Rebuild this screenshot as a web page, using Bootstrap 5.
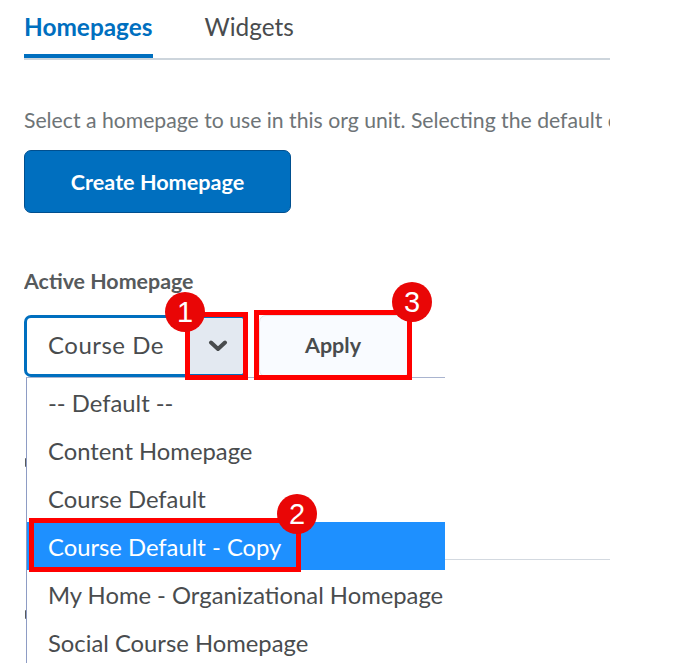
<!DOCTYPE html>
<html lang="en">
<head>
<meta charset="utf-8">
<title>Homepages</title>
<link href="https://cdn.jsdelivr.net/npm/bootstrap@5.3.0/dist/css/bootstrap.min.css" rel="stylesheet">
<style>
html,body{height:663px;overflow:hidden;background:#fff}
body{font-family:Lato,"Liberation Sans",sans-serif;color:#494c4e}
.stage{position:relative;height:663px;width:680px;overflow:hidden}
.pane{width:586px;margin-left:24px;overflow:hidden}
.tabbar{height:60px;border-bottom:2px solid #cdd5dc;gap:52px}
.tabitem{font-size:24.4px;line-height:29px;padding-top:12px;height:58px;color:#494c4e;text-decoration:none}
.tabitem.on{color:#006fbf;font-weight:700;border-bottom:4px solid #006fbf}
.intro{font-size:21.2px;line-height:28px;color:#6e7477;white-space:nowrap;margin:46px 0 0;height:30px}
.makebtn{display:block;width:267px;height:63px;margin-top:14px;background:#006fbf;border:1px solid #004f8f;border-radius:7px;color:#fff;font-size:21.6px;font-weight:700;padding:2px 0 0}
.fieldlabel{font-size:21.4px;font-weight:700;line-height:24px;margin:56px 0 0;color:#565a5c}
.pickrow{margin-top:22px;gap:12px}
.picker{width:223px;height:62px;border:3px solid #006fbf;border-radius:7px;overflow:hidden}
.pickval{flex:1;font-size:24px;letter-spacing:.5px;margin-left:21px;margin-right:25px;line-height:54px;white-space:nowrap;overflow:hidden;min-width:0}
.pickarrow{width:56px;padding-left:4px;background:#e3e9f1;flex:none}
.applybtn{width:150px;height:62px;background:#f9fbff;border:1px solid #dfe3e8;border-radius:7px;color:#494c4e;font-size:21.5px;font-weight:700;padding:0 2px 2px 0}
.behind{position:absolute;left:445px;top:559px;width:165px;height:1px;background:#d3d9e0}
.peek{position:absolute;left:25px;width:1.5px;height:9px;background:#565a5c;border-radius:1px}
.k1{top:458px}
.k2{top:610px}
.optlist{position:absolute;left:26px;top:377px;width:419px;height:286px;background:#fff;border-left:1px solid #8e9cc4;border-top:1px solid #a9b4cf;padding:0;margin:0;border-radius:0}
.optlist .optitem{height:48px;line-height:50px;padding:0 0 0 21px;font-size:23.8px;color:#494c4e;white-space:nowrap;border:0;border-radius:0;background:transparent}
.optlist .optitem.chosen{background:#1e90ff;color:#fff}
.redbox{position:absolute;border:5px solid #f00}
.b1{left:185px;top:312px;width:63px;height:68px}
.b2{left:29px;top:518px;width:272px;height:54px}
.b3{left:254px;top:310px;width:158px;height:70px}
.pin{position:absolute;width:40px;height:40px;border-radius:50%;background:#e90606;color:#fff;font-family:"Liberation Sans",sans-serif;font-size:29px;line-height:40px;text-align:center}
.p1{left:165px;top:292px}
.p2{left:277px;top:494px}
.p3{left:392px;top:282px}
</style>
</head>
<body>
<div class="stage">
  <div class="pane">
    <nav class="tabbar d-flex">
      <a class="tabitem on" href="#">Homepages</a>
      <a class="tabitem" href="#">Widgets</a>
    </nav>
    <p class="intro">Select a homepage to use in this org unit. Selecting the default option will use the organization's homepage.</p>
    <button type="button" class="btn makebtn">Create Homepage</button>
    <div class="fieldlabel">Active Homepage</div>
    <div class="pickrow d-flex">
      <div class="picker d-flex">
        <div class="pickval">Course Default - Copy</div>
        <div class="pickarrow d-flex align-items-center justify-content-center">
          <svg width="20" height="12" viewBox="0 0 20 12" aria-hidden="true"><path d="M3 2.5 10 9 17 2.5" fill="none" stroke="#494c4e" stroke-width="4" stroke-linecap="round" stroke-linejoin="round"/></svg>
        </div>
      </div>
      <button type="button" class="btn applybtn">Apply</button>
    </div>
  </div>
  <div class="behind"></div>
  <div class="peek k1"></div>
  <div class="peek k2"></div>
  <ul class="optlist list-group">
    <li class="optitem list-group-item">-- Default --</li>
    <li class="optitem list-group-item">Content Homepage</li>
    <li class="optitem list-group-item">Course Default</li>
    <li class="optitem chosen list-group-item">Course Default - Copy</li>
    <li class="optitem list-group-item">My Home - Organizational Homepage</li>
    <li class="optitem list-group-item">Social Course Homepage</li>
  </ul>
  <div class="redbox b1"></div>
  <div class="redbox b2"></div>
  <div class="redbox b3"></div>
  <div class="pin p1">1</div>
  <div class="pin p2">2</div>
  <div class="pin p3">3</div>
</div>
</body>
</html>
